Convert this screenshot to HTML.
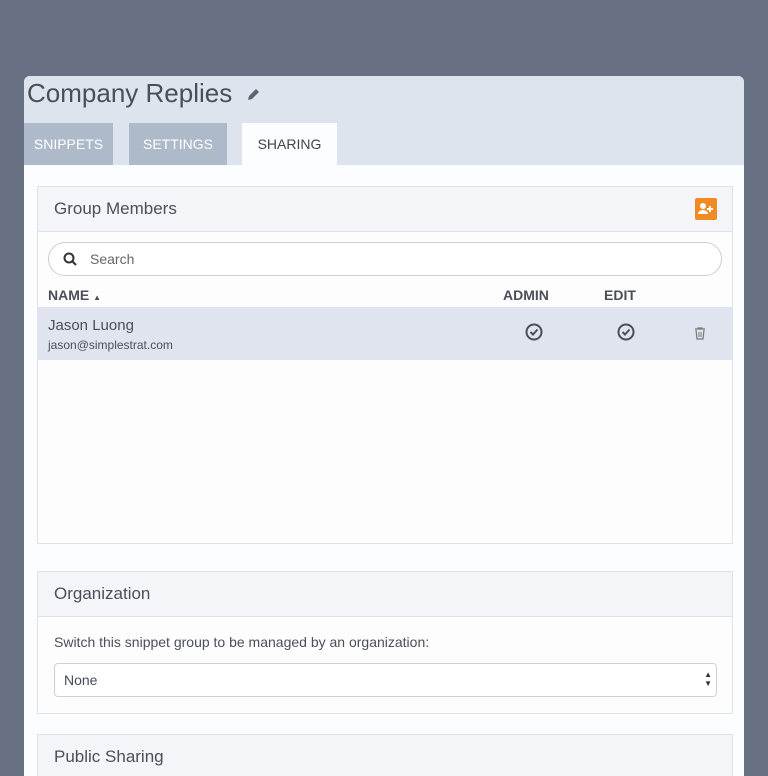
<!DOCTYPE html>
<html><head><style>
body{margin:0;width:768px;height:768px;background:#687184;font-family:"Liberation Sans",sans-serif;overflow:hidden;position:relative;color:#444b55}
.panel{position:absolute;left:24px;top:76px;width:720px;height:700px;background:#fcfdfe;border-radius:6px 6px 0 0;overflow:hidden}
.head{position:absolute;left:0;top:0;width:720px;height:89px;background:#dee4ed}
.title{position:absolute;left:3px;top:2px;font-size:26px;color:#4a4f57}
.tab{position:absolute;top:47px;height:42px;line-height:42px;text-align:center;font-size:14px;color:#fff;background:#aebaca}
.card{position:absolute;left:13px;width:694px;border:1px solid #dfe3e9;background:#fdfdfe}
.ch{height:44px;line-height:44px;padding-left:16px;font-size:17px;color:#4a5059;background:#f3f5f8;border-bottom:1px solid #dfe3e9}
.abs{position:absolute}
</style></head><body>
<div class="panel">
 <div class="head">
  <div class="title">Company Replies <svg width="16" height="16" viewBox="0 0 16 16" style="margin-left:6px;vertical-align:middle"><path d="M3 13l1-4 7-7 3 3-7 7z" fill="#5b6270"/></svg></div>
  <div class="tab" style="left:0;width:89px">SNIPPETS</div>
  <div class="tab" style="left:105px;width:98px">SETTINGS</div>
  <div class="tab" style="left:218px;width:95px;background:#fcfdfe;color:#444">SHARING</div>
 </div>
 <div class="card" style="top:110px;height:356px">
  <div class="ch">Group Members</div>
  <div class="abs" style="left:657px;top:11px;width:22px;height:22px;background:#f28a23;border-radius:2px"><svg width="22" height="22"><circle cx="8" cy="8" r="3" fill="#fff"/><path d="M3 16a5 4 0 0 1 10 0z" fill="#fff"/><path d="M15 8v6M12 11h6" stroke="#fff" stroke-width="2"/></svg></div>
  <div class="abs" style="left:10px;top:55px;width:672px;height:32px;border:1px solid #c9cfd8;border-radius:17px;background:#fff">
   <svg class="abs" style="left:14px;top:9px" width="14" height="14"><circle cx="6" cy="6" r="4.5" stroke="#333" stroke-width="2" fill="none"/><path d="M9.5 9.5l3.5 3.5" stroke="#333" stroke-width="2"/></svg>
   <span class="abs" style="left:41px;top:8px;font-size:14px;color:#666">Search</span></div>
  <div class="abs" style="left:10px;top:100px;font-size:14px;font-weight:bold;color:#4a5059">NAME <span style="font-size:8px">▲</span></div>
  <div class="abs" style="left:465px;top:100px;font-size:14px;font-weight:bold;color:#4a5059">ADMIN</div>
  <div class="abs" style="left:566px;top:100px;font-size:14px;font-weight:bold;color:#4a5059">EDIT</div>
  <div class="abs" style="left:0;top:120px;width:694px;height:53px;background:#dfe4ee">
   <div class="abs" style="left:10px;top:10px;font-size:15px;color:#4a5059">Jason Luong</div>
   <div class="abs" style="left:10px;top:31px;font-size:12px;color:#4a5059">jason@simplestrat.com</div>
   <svg class="abs" style="left:487px;top:16px" width="18" height="18"><circle cx="9" cy="9" r="7.5" stroke="#4a4f57" stroke-width="2" fill="none"/><path d="M5.5 9l2.5 2.5 4.5-5" stroke="#4a4f57" stroke-width="2" fill="none"/></svg>
   <svg class="abs" style="left:579px;top:16px" width="18" height="18"><circle cx="9" cy="9" r="7.5" stroke="#4a4f57" stroke-width="2" fill="none"/><path d="M5.5 9l2.5 2.5 4.5-5" stroke="#4a4f57" stroke-width="2" fill="none"/></svg>
   <svg class="abs" style="left:656px;top:20px" width="12" height="13"><path d="M1 2h10M4 2V1h4v1M2 3l1 9h6l1-9" stroke="#777" stroke-width="1.2" fill="none"/><path d="M5 5v5M7 5v5" stroke="#777"/></svg>
  </div>
 </div>
 <div class="card" style="top:495px;height:141px">
  <div class="ch">Organization</div>
  <div class="abs" style="left:16px;top:62px;font-size:14px;color:#4a5059">Switch this snippet group to be managed by an organization:</div>
  <div class="abs" style="left:16px;top:91px;width:661px;height:32px;border:1px solid #ccd1d8;border-radius:4px;background:#fff">
   <span class="abs" style="left:9px;top:8px;font-size:14px">None</span>
   <span class="abs" style="right:4px;top:6px;font-size:8px;line-height:9px;color:#333">▲<br>▼</span></div>
 </div>
 <div class="card" style="top:658px;height:60px">
  <div class="ch">Public Sharing</div>
 </div>
</div>
</body></html>
